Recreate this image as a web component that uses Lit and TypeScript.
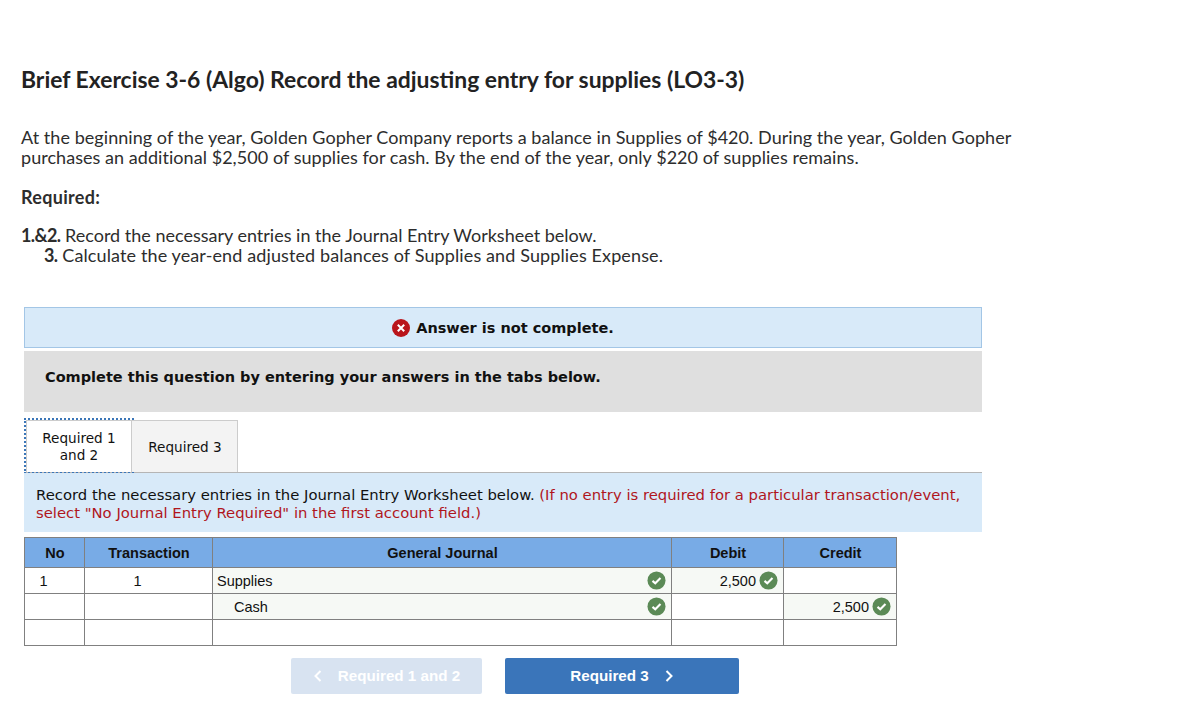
import { LitElement, html, css } from "lit";
import { customElement } from "lit/decorators.js";

const check = html`<svg class="chk" viewBox="0 0 20 20" width="19" height="19"><circle cx="10" cy="10" r="9.5" fill="#5b8a56"/><path d="M5.8 10.4 8.7 13 14.2 7.4" fill="none" stroke="#fff" stroke-width="2.2"/></svg>`;

@customElement("app-root")
export class AppRoot extends LitElement {
  static styles = css`
    :host { display: block; width: 1191px; height: 713px; background: #fff; overflow: hidden; font-family: Lato, "Liberation Sans", sans-serif; color: #2d2d2d; }
    .page { padding: 67px 0 0 21px; display: flex; flex-direction: column; }
    h1 { margin: 0; font-size: 22.9px; line-height: 24px; font-weight: 700; color: #222; }
    .intro { margin: 36px 0 0; font-size: 18px; line-height: 20px; width: 1000px; letter-spacing: 0.05px; }
    .req { margin: 20px 0 0; font-size: 18px; line-height: 20px; font-weight: 700; letter-spacing: 0.3px; }
    .steps { margin: 18px 0 0; font-size: 18px; line-height: 20px; }
    .steps b { letter-spacing: -0.6px; }
    .l2 { padding-left: 23px; letter-spacing: 0.12px; }
    .panel { margin: 42px 0 0 3px; width: 958px; display: flex; flex-direction: column; }
    .verd { font-family: "DejaVu Sans", Verdana, sans-serif; }
    .notice { height: 41px; box-sizing: border-box; background: #d8eaf9; border: 1px solid #a3c6e6; display: flex; align-items: center; justify-content: center; gap: 6px; font-size: 14.5px; font-weight: 700; color: #111; }
    .notice svg { display: block; }
    .complete { margin-top: 3px; height: 61px; box-sizing: border-box; padding: 0 0 10px 21px; background: #dfdfdf; display: flex; align-items: center; font-size: 14.5px; font-weight: 700; color: #111; }
    .tabs { margin-top: 8px; height: 52px; display: flex; align-items: flex-end; border-bottom: 1px solid #b5b5b5; padding-left: 2px; }
    .tab { box-sizing: border-box; display: flex; align-items: center; justify-content: center; text-align: center; font-size: 13.6px; line-height: 17px; color: #111; }
    .tab.on { width: 106px; height: 52px; background: #fff; outline: 2px dotted #3b76b8; border: 1px solid #ccc; border-bottom: none; }
    .tab.off { width: 106px; height: 52px; padding: 1px 0 0 1px; background: #f3f3f3; border: 1px solid #ccc; border-left: none; border-bottom: none; }
    .instr { height: 59px; box-sizing: border-box; background: #d8eaf9; padding: 13px 11px 0 12px; font-size: 14.82px; line-height: 18px; color: #111; }
    .instr span { color: #b0161d; }
    table { margin-top: 5px; border-collapse: collapse; table-layout: fixed; width: 873px; font-family: "Liberation Sans", Arial, sans-serif; font-size: 14.5px; color: #111; }
    th { height: 29px; padding: 0 0 0 1px; background: #78abe6; border: 1px solid #808080; font-weight: 700; text-align: center; }
    td { height: 25px; padding: 0 2px 0 4px; border: 1px solid #808080; }
    td.c { text-align: center; }
    td.no { padding-right: 26px; }
    td.tx { padding: 0 22px 0 0; }
    td.f { background: #f6f9f5; }
    .cell { display: flex; align-items: center; justify-content: flex-end; gap: 3px; padding-right: 3px; }
    .acct { display: flex; align-items: center; justify-content: space-between; padding-right: 3px; }
    .ind { padding-left: 17px; }
    .chk { display: block; flex: none; }
    .nav { margin: 12px 0 0 267px; display: flex; gap: 23px; }
    .btn { height: 36px; box-sizing: border-box; padding-bottom: 1px; border-radius: 2px; display: flex; align-items: center; justify-content: center; color: #fff; font-family: "Liberation Sans", Arial, sans-serif; font-size: 15.2px; font-weight: 700; gap: 15px; }
    .prev { width: 191px; background: #d8e3f1; }
    .next { width: 234px; background: #3a75ba; }
    .btn svg { display: block; }
  `;

  render() {
    return html`<div class="page">
      <h1>Brief Exercise 3-6 (Algo) Record the adjusting entry for supplies (LO3-3)</h1>
      <p class="intro">At the beginning of the year, Golden Gopher Company reports a balance in Supplies of $420. During the year, Golden Gopher purchases an additional $2,500 of supplies for cash. By the end of the year, only $220 of supplies remains.</p>
      <p class="req">Required:</p>
      <div class="steps">
        <div><b>1.&amp;2.</b> Record the necessary entries in the Journal Entry Worksheet below.</div>
        <div class="l2"><b>3.</b> Calculate the year-end adjusted balances of Supplies and Supplies Expense.</div>
      </div>
      <div class="panel">
        <div class="notice verd">
          <svg viewBox="0 0 18 18" width="18" height="18"><circle cx="9" cy="9" r="9" fill="#b9151b"/><path d="M5.8 5.8 12.2 12.2M12.2 5.8 5.8 12.2" stroke="#fff" stroke-width="2"/></svg>
          <span>Answer is not complete.</span>
        </div>
        <div class="complete verd">Complete this question by entering your answers in the tabs below.</div>
        <div class="tabs verd">
          <div class="tab on">Required 1<br />and 2</div>
          <div class="tab off">Required 3</div>
        </div>
        <div class="instr verd">Record the necessary entries in the Journal Entry Worksheet below. <span>(If no entry is required for a particular transaction/event, select "No Journal Entry Required" in the first account field.)</span></div>
        <table>
          <colgroup><col style="width:60px" /><col style="width:128px" /><col style="width:459px" /><col style="width:112px" /><col style="width:113px" /></colgroup>
          <thead><tr><th>No</th><th>Transaction</th><th>General Journal</th><th>Debit</th><th>Credit</th></tr></thead>
          <tbody>
            <tr>
              <td class="c no">1</td><td class="c tx">1</td>
              <td class="f"><div class="acct"><span>Supplies</span>${check}</div></td>
              <td class="f"><div class="cell"><span>2,500</span>${check}</div></td>
              <td></td>
            </tr>
            <tr>
              <td></td><td></td>
              <td class="f"><div class="acct"><span class="ind">Cash</span>${check}</div></td>
              <td></td>
              <td class="f"><div class="cell"><span>2,500</span>${check}</div></td>
            </tr>
            <tr><td></td><td></td><td></td><td></td><td></td></tr>
          </tbody>
        </table>
        <div class="nav">
          <div class="btn prev">
            <svg viewBox="0 0 10 14" width="10" height="14"><path d="M7.5 2 2.5 7l5 5" fill="none" stroke="#fff" stroke-width="2"/></svg>
            <span>Required 1 and 2</span>
          </div>
          <div class="btn next">
            <span>Required 3</span>
            <svg viewBox="0 0 10 14" width="10" height="14"><path d="M2.5 2l5 5-5 5" fill="none" stroke="#fff" stroke-width="2"/></svg>
          </div>
        </div>
      </div>
    </div>`;
  }
}
